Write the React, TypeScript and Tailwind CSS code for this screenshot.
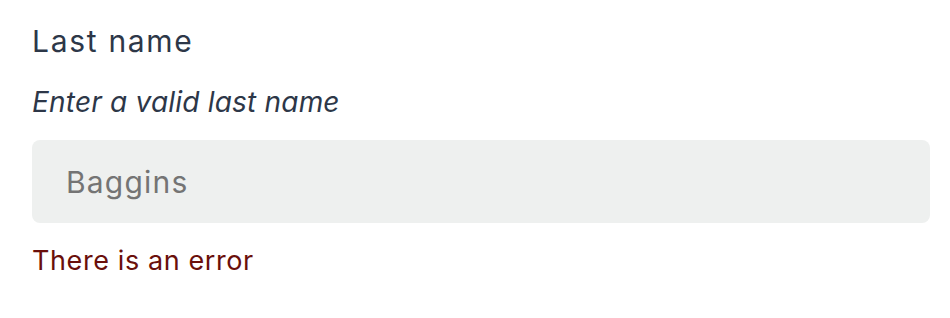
import React from 'react';

const App = () => {
  return (
    <div className="w-[950px] h-[318px] bg-white px-8 pt-[23px] font-['Inter','Noto_Sans',sans-serif]">
      <label htmlFor="last-name" className="block text-[30px] leading-[36px] tracking-[1.7px] text-[#2d3748]">
        Last name
      </label>
      <p className="mt-[26px] text-[28px] leading-[34px] italic tracking-[0.2px] text-[#2d3748]">Enter a valid last name</p>
      <input
        id="last-name"
        type="text"
        placeholder="Baggins"
        className="mt-[21px] block w-[898px] h-[83px] rounded-lg bg-[#eef0ef] px-[34px] text-[30px] tracking-[1.2px] text-[#2d3748] placeholder:text-[#747474] outline-none"
      />
      <p className="mt-[21px] text-[27px] leading-[33px] tracking-[0.6px] text-[#6a0f0b]">There is an error</p>
    </div>
  );
};

export default App;
